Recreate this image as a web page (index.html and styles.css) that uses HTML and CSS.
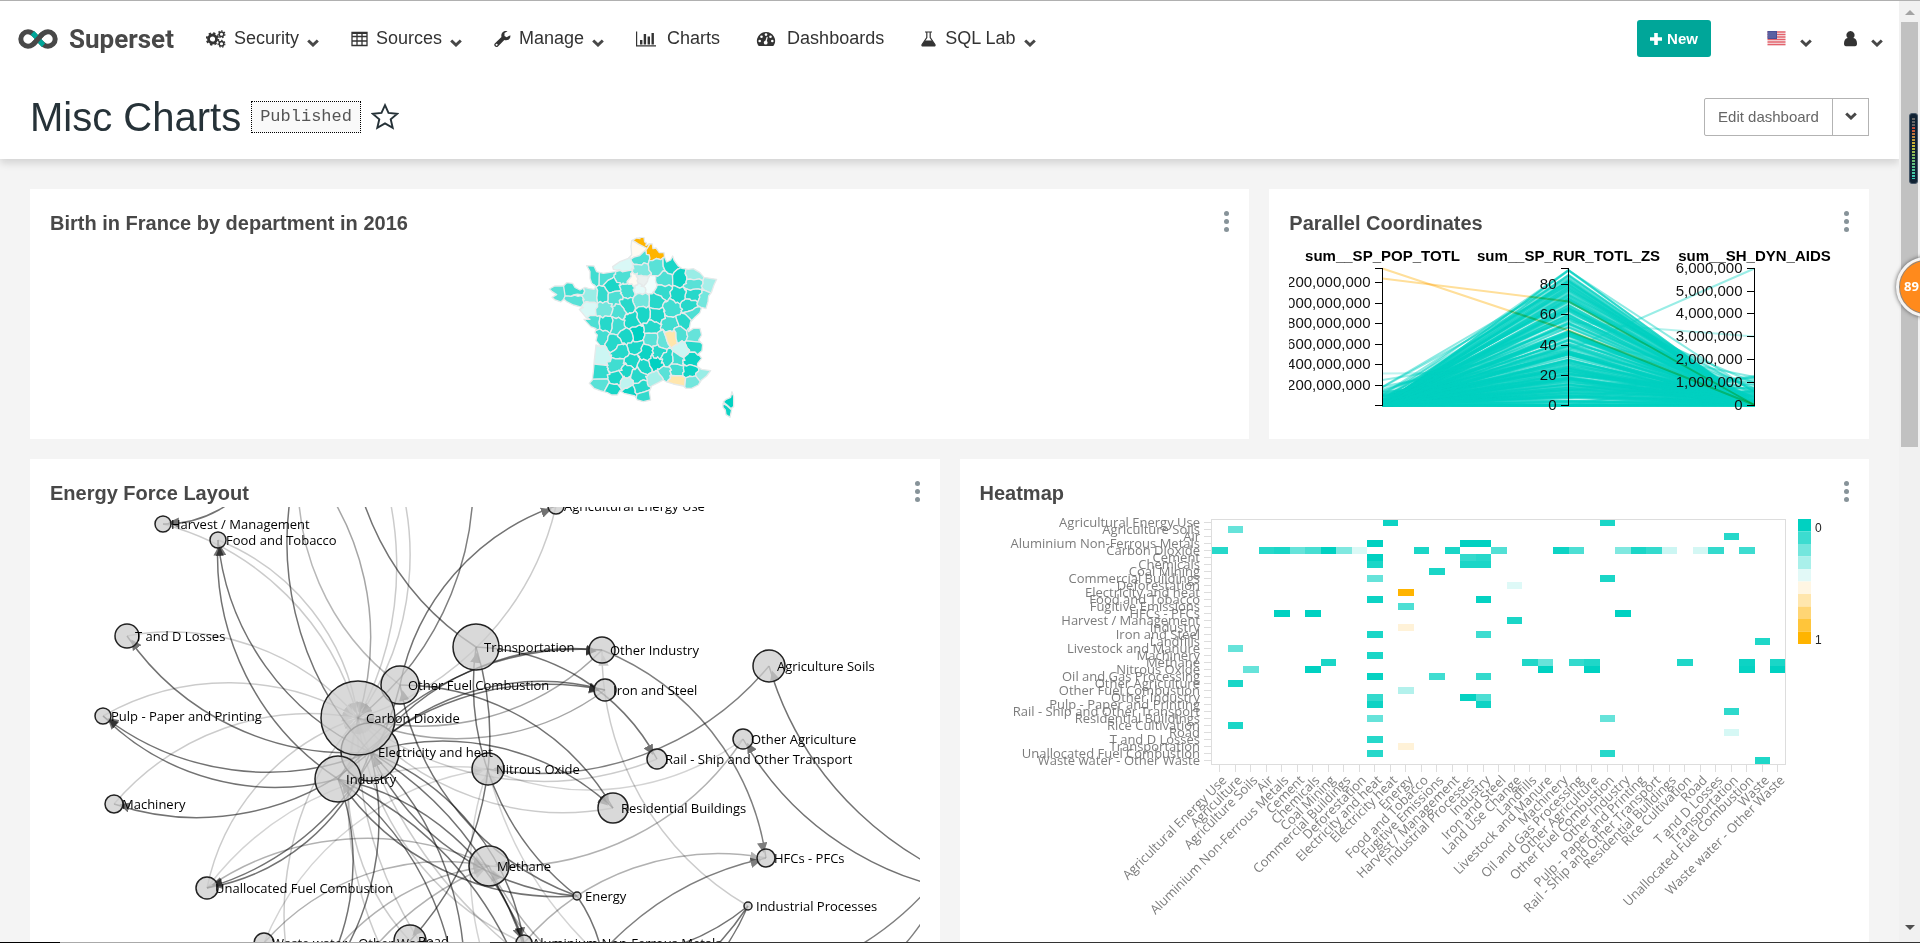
FILE: index.html
```html
<!DOCTYPE html>
<html lang="en">
<head>
<meta charset="utf-8">
<title>Misc Charts - Superset</title>
<link rel="stylesheet" href="styles.css">
</head>
<body>
<div class="app">
  <div class="page">
    <header class="header">
      <nav class="nav">
        <a class="brand" href="#">
          <svg class="brand-mark" viewBox="0 0 40 20" aria-hidden="true">
            <path d="M20 10C15.500 15.500 13.500 17.200 10 17.200A7.200 7.200 0 0 1 10 2.800C13.500 2.800 15.500 4.500 20 10" fill="none" stroke="#484848" stroke-width="5"/>
            <path d="M20 10C24.500 15.500 26.500 17.200 30 17.200A7.200 7.200 0 0 0 30 2.800C26.500 2.800 24.500 4.500 20 10" fill="none" stroke="#484848" stroke-width="5"/>
            <path d="M14.500 3.800C18 7 21.500 12.500 25.500 16.200" fill="none" stroke="#00a699" stroke-width="5"/>
            <path d="M15.500 15.200L24.500 4.800" fill="none" stroke="#484848" stroke-width="5"/>
          </svg>
          <span>Superset</span>
        </a>
        <ul class="menu">
          <li><a class="menu-link" href="#">
            <svg class="icon" viewBox="0 0 20 18" aria-hidden="true">
              <circle cx="6.500" cy="9" r="4" fill="none" stroke="#333" stroke-width="2.800"/>
              <circle cx="6.500" cy="9" r="5.800" fill="none" stroke="#333" stroke-width="1.800" stroke-dasharray="2.300 2.250"/>
              <circle cx="15.500" cy="4.200" r="2.300" fill="none" stroke="#333" stroke-width="1.500"/>
              <circle cx="15.500" cy="4.200" r="3.400" fill="none" stroke="#333" stroke-width="1.200" stroke-dasharray="1.500 1.550"/>
              <circle cx="15.500" cy="13.800" r="2.300" fill="none" stroke="#333" stroke-width="1.500"/>
              <circle cx="15.500" cy="13.800" r="3.400" fill="none" stroke="#333" stroke-width="1.200" stroke-dasharray="1.500 1.550"/>
            </svg><span>Security</span>
            <svg class="chevron" viewBox="0 0 12 8" aria-hidden="true"><path d="M1.200 1.500L6 6L10.800 1.500"/></svg></a></li>
          <li><a class="menu-link" href="#">
            <svg class="icon icon-narrow" viewBox="0 0 17 18" aria-hidden="true">
              <path d="M1 2.500h15v13H1zM1 6.500h15M1 11h15M6 2.500v13M11 2.500v13" fill="none" stroke="#333" stroke-width="1.300"/><path d="M1 2h15v2H1z" fill="#333"/>
            </svg><span>Sources</span>
            <svg class="chevron" viewBox="0 0 12 8" aria-hidden="true"><path d="M1.200 1.500L6 6L10.800 1.500"/></svg></a></li>
          <li><a class="menu-link" href="#">
            <svg class="icon icon-narrow" viewBox="0 0 17 18" aria-hidden="true">
              <path d="M13.500 1.200L10.500 3v3l2.200 1.200L16.300 5.200C17 9 13.500 11 10.300 9.900L4.200 16.200C3 17.400 1.800 17.200.9 16.300C0 15.300 0 14.200 1 13.200L7.500 7C6.500 3.500 9.500.200 13.500 1.200zM2.600 13.800a.9.9 0 1 0 .01 0z" fill="#333" fill-rule="evenodd"/>
            </svg><span>Manage</span>
            <svg class="chevron" viewBox="0 0 12 8" aria-hidden="true"><path d="M1.200 1.500L6 6L10.800 1.500"/></svg></a></li>
          <li class="plain"><a class="menu-link" href="#">
            <svg class="icon" viewBox="0 0 20 18" aria-hidden="true">
              <path d="M.6 1.500V15.900H20" fill="none" stroke="#333" stroke-width="1.200"/>
              <path d="M4 10h2.400v4.500H4zM7.700 4h2.400v10.500H7.700zM11.600 6.500H14v8h-2.400zM15.500 3h2.400v11.500h-2.400z" fill="#333"/>
            </svg><span>Charts</span></a></li>
          <li class="plain"><a class="menu-link" href="#">
            <svg class="icon" viewBox="0 0 20 18" aria-hidden="true">
              <path d="M10 2a9 9 0 0 1 7.800 13.600q-.4.400-1 .400H3.200q-.6 0-1-.400A9 9 0 0 1 10 2z" fill="#333"/>
              <g fill="#fff"><circle cx="3.700" cy="11" r="1.300"/><circle cx="5.500" cy="6.700" r="1.300"/><circle cx="10" cy="4.600" r="1.300"/><circle cx="14.500" cy="6.700" r="1.300"/><circle cx="16.300" cy="11" r="1.300"/><circle cx="9.700" cy="12.700" r="1.900"/><path d="M9 12l1.700-5.200 1 .3L10.500 12.500z"/></g>
            </svg><span>Dashboards</span></a></li>
          <li><a class="menu-link" href="#">
            <svg class="icon icon-narrow" viewBox="0 0 16 18" aria-hidden="true">
              <path d="M4.500 2h7M6.300 2v5.500L1.600 14.500Q1 16 2.500 16h11q1.500 0 .9-1.500L9.700 7.500V2" fill="none" stroke="#333" stroke-width="1.200"/>
              <path d="M4.500 10.500h7l3.200 4.500-.7 1H2l-.7-1z" fill="#333"/>
            </svg><span>SQL Lab</span>
            <svg class="chevron" viewBox="0 0 12 8" aria-hidden="true"><path d="M1.200 1.500L6 6L10.800 1.500"/></svg></a></li>
        </ul>
        <div class="nav-right">
          <button class="new-button" type="button">
            <svg width="12" height="12" viewBox="0 0 12 12" aria-hidden="true"><path d="M6 0v12M0 6h12" stroke="#fff" stroke-width="3.600"/></svg>New</button>
          <button class="icon-button language" type="button" aria-label="Language">
            <svg class="flag" viewBox="0 0 18 15" aria-hidden="true">
              <path d="M0 0h18v15H0z" fill="#f7f2f2"/>
              <path d="M0 1h18M0 3.500h18M0 6h18M0 8.500h18M0 11h18M0 13.500h18" stroke="#e4616b" stroke-width="1.400"/>
              <path d="M0 0h9.500v8H0z" fill="#4a4f96"/>
              <path d="M1 2h8M1 4h8M1 6h8" stroke="#a5a8d0" stroke-width=".8" stroke-dasharray="1 1"/>
            </svg>
            <svg class="chevron" viewBox="0 0 12 8" aria-hidden="true"><path d="M1.200 1.500L6 6L10.800 1.500"/></svg>
          </button>
          <button class="icon-button account" type="button" aria-label="Account">
            <svg class="user" viewBox="0 0 13 16" aria-hidden="true"><path d="M6.500 0a4 4 0 0 1 2.800 6.900Q13 7.500 13 12.500q0 2.800-2 2.800H2q-2 0-2-2.800Q0 7.500 3.700 6.900A4 4 0 0 1 6.500 0z" fill="#333"/></svg>
            <svg class="chevron" viewBox="0 0 12 8" aria-hidden="true"><path d="M1.200 1.500L6 6L10.800 1.500"/></svg>
          </button>
        </div>
      </nav>
      <div class="title-row">
        <h1 class="title">Misc Charts</h1>
        <span class="published">Published</span>
        <button class="star" type="button" aria-label="Favorite">
          <svg width="28" height="27" viewBox="0 0 28 27" aria-hidden="true"><path d="M14 2.200L17.500 9.900L26.300 10.700L19.700 16.300L21.700 24.800L14 20.400L6.300 24.800L8.300 16.300L1.700 10.700L10.500 9.900Z" fill="none" stroke="#263238" stroke-width="1.900"/></svg>
        </button>
        <div class="edit-group">
          <button class="edit" type="button">Edit dashboard</button>
          <button class="edit-more" type="button" aria-label="More actions">
            <svg class="chevron" viewBox="0 0 12 8" aria-hidden="true"><path d="M1.200 1.500L6 6L10.800 1.500"/></svg>
          </button>
        </div>
      </div>
    </header>

    <main class="grid">
      <section class="card wide">
        <div class="card-head"><h2>Birth in France by department in 2016</h2>
          <button class="dots" type="button" aria-label="Chart options"><i></i><i></i><i></i></button></div>
        <svg class="chart short" id="map" viewBox="50 237 1179 182" preserveAspectRatio="xMinYMin meet" role="img" aria-label="Map of France">
          <defs><clipPath id="france"><path id="france-outline"/></clipPath></defs>
        </svg>
      </section>
      <section class="card narrow">
        <div class="card-head"><h2>Parallel Coordinates</h2>
          <button class="dots" type="button" aria-label="Chart options"><i></i><i></i><i></i></button></div>
        <svg class="chart short" id="parallel" viewBox="1289 237 559 182" preserveAspectRatio="xMinYMin meet" role="img" aria-label="Parallel coordinates"></svg>
      </section>
      <section class="card half">
        <div class="card-head"><h2>Energy Force Layout</h2>
          <button class="dots" type="button" aria-label="Chart options"><i></i><i></i><i></i></button></div>
        <svg class="chart tall" id="force" viewBox="50 507 869 470" preserveAspectRatio="xMinYMin meet" role="img" aria-label="Energy force layout">
          <defs><marker id="arrow" viewBox="0 -5 10 10" refX="15" refY="-1.500" markerWidth="7" markerHeight="7" orient="auto"><path d="M0-5L10 0L0 5"/></marker></defs>
        </svg>
      </section>
      <section class="card half">
        <div class="card-head"><h2>Heatmap</h2>
          <button class="dots" type="button" aria-label="Chart options"><i></i><i></i><i></i></button></div>
        <svg class="chart tall" id="heatmap" viewBox="980 507 869 470" preserveAspectRatio="xMinYMin meet" role="img" aria-label="Heatmap"></svg>
      </section>
    </main>
  </div>
  <aside class="scrollbar" aria-hidden="true">
    <span class="arrow-up"></span><span class="thumb"></span><span class="arrow-down"></span>
  </aside>
</div>
<div class="meter" aria-hidden="true"><span></span></div>
<div class="score">89</div>
<div class="taskline"></div>
<script src="script.js"></script>
</body>
</html>
```
FILE: styles.css
```css
* { box-sizing: border-box; }
body {
  margin: 0;
  height: 100vh;
  overflow: hidden;
  background: #f4f4f4;
  font-family: "Liberation Sans", Arial, sans-serif;
  color: #484848;
}
button { font: inherit; color: inherit; background: none; border: 0; padding: 0; }
a { color: inherit; text-decoration: none; }
.app { display: flex; height: 100vh; border-top: 1px solid #b0b0b0; }
.page { flex: 1; min-width: 0; overflow: hidden; }

.header { background: #fff; box-shadow: 0 4px 8px rgba(0, 0, 0, 0.14); position: relative; }
.nav { display: flex; align-items: center; height: 75px; padding: 0 16px 0 18px; }
.brand { display: flex; align-items: center; gap: 11px; font: bold 26px/28px Roboto, sans-serif; color: #484848; margin-right: 32px; }
.brand-mark { width: 40px; height: 20px; }
.menu { display: flex; list-style: none; margin: 0; padding: 0; gap: 32px; font-size: 18px; color: #333; }
.plain { margin-right: 4px; }
.menu-link { display: flex; align-items: center; gap: 8px; }
.plain .menu-link { gap: 11px; }
.icon { width: 20px; height: 18px; }
.icon-narrow { width: 17px; }
.chevron { width: 12px; height: 8px; fill: none; stroke: #484848; stroke-width: 3; }
.menu .chevron, .icon-button .chevron { margin-top: 8px; }
.nav-right { display: flex; align-items: center; margin-left: auto; }
.new-button { display: flex; align-items: center; justify-content: center; gap: 5px; width: 74px; height: 37px; border-radius: 3px; background: #00a699; color: #fff; font-size: 15px; font-weight: bold; margin-right: 56px; }
.icon-button { display: flex; align-items: center; gap: 14px; }
.language { margin-right: 32px; }
.flag { width: 19px; height: 15px; }
.user { width: 13px; height: 16px; }

.title-row { display: flex; align-items: center; height: 83px; padding: 0 30px 2px; }
.title { margin: 0; font-size: 40px; font-weight: normal; line-height: 46px; color: #263238; }
.published { margin-left: 10px; height: 32px; padding: 0 8px; border: 1px dotted #000; background: #f9f9f9; font: 17px/30px "Liberation Mono", monospace; color: #555; }
.star { margin-left: 10px; height: 27px; }
.edit-group { display: flex; margin-left: auto; height: 38px; }
.edit { width: 129px; border: 1px solid #b3b3b3; border-radius: 2px 0 0 2px; font-size: 15px; color: #666; }
.edit-more { width: 37px; margin-left: -1px; padding-bottom: 4px; border: 1px solid #b3b3b3; }

.grid { display: grid; grid-template-columns: repeat(12, 1fr); gap: 20px; padding: 30px; }
.card { min-width: 0; background: #fff; padding: 20px; }
.wide { grid-column: span 8; }
.narrow { grid-column: span 4; }
.half { grid-column: span 6; }
.card-head { display: flex; justify-content: space-between; height: 28px; }
.card-head h2 { margin: 0; padding-top: 2px; font-size: 20px; line-height: 24px; }
.dots { display: flex; flex-direction: column; gap: 3px; padding-top: 2px; height: 26px; }
.dots i { width: 5px; height: 5px; border-radius: 50%; background: #879399; }
.chart { display: block; width: 100%; overflow: hidden; }
.short { height: 182px; }
.tall { height: 470px; }

.dept { stroke: #e6eaea; stroke-width: 4; stroke-linejoin: round; }
.coast { fill: none; stroke: #e6eaea; stroke-width: 4; stroke-linejoin: round; }
.line { fill: none; stroke: #00d1c1; stroke-width: 2; }
.line-warm { fill: none; stroke: #ffdf9a; stroke-width: 2; mix-blend-mode: multiply; }
.axis { fill: none; stroke: #000; stroke-width: 1; shape-rendering: crispEdges; }
.axis-text { font-size: 15px; fill: #111; text-anchor: end; }
.axis-title { font-size: 15px; font-weight: bold; fill: #000; text-anchor: middle; }
.link { fill: none; stroke: #000; stroke-width: 1.5; }
.node { fill: #ccc; fill-opacity: 0.75; stroke: #222; stroke-width: 1.5; }
.node-text { font: 13px "Open Sans", sans-serif; fill: #000; }
.cell { shape-rendering: crispEdges; }
.frame { fill: none; stroke: #ddd; shape-rendering: crispEdges; }
.heat-text { font: 13px "Open Sans", sans-serif; fill: #7c7c7c; text-anchor: end; }
.legend-text { font-size: 12px; fill: #222; }

.scrollbar { display: flex; flex-direction: column; align-items: center; width: 21px; padding: 9px 0 13px; background: #f1f1f1; }
.arrow-up { border: 5px solid transparent; border-top: 0; border-bottom-color: #a3a3a3; }
.thumb { width: 17px; height: 425px; margin-top: 7px; background: #c1c1c1; }
.arrow-down { margin-top: auto; border: 5px solid transparent; border-bottom: 0; border-top-color: #505050; }
.meter { position: fixed; right: 2px; top: 113px; width: 9px; height: 71px; padding: 4px 2px; border-radius: 3px; background: #123; border: 1px solid #456; }
.meter span { display: block; height: 100%; background: repeating-linear-gradient(transparent 0 2px, #123 2px 3px), linear-gradient(#666 14%, #c43 16%, #b84 30%, #cb3 45%, #7b6 65%, #3cb 100%); }
.score { position: fixed; right: -36px; top: 257px; width: 60px; height: 60px; padding-left: 5px; border: 3px solid #f4f4f4; border-radius: 50%; background: #ff8a1c; box-shadow: 0 0 0 1px #888 inset, 0 0 4px #555; color: #fff; font: bold 13px/52px "Open Sans", sans-serif; }
.taskline { position: fixed; left: 0; right: 0; bottom: 0; height: 1px; background: linear-gradient(90deg, #000 60px, #aaa 60px 490px, #333 490px); }
```
FILE: script.js
```javascript
const NS = 'http://www.w3.org/2000/svg';
function add(parent, tag, attrs, text) {
  const el = document.createElementNS(NS, tag);
  for (const key in attrs) el.setAttribute(key, attrs[key]);
  if (text !== undefined) el.textContent = text;
  parent.appendChild(el);
  return el;
}
let state = 7;
function random() {
  state = (state * 16807) % 2147483647;
  return state / 2147483647;
}
function tint(t) {
  if (t === 'orange') return '#ffb400';
  if (t === 'sand') return '#ffe6ad';
  if (t === 'cream') return '#fff2d8';
  if (t === 'ivory') return '#fffaf2';
  if (t === 'grey') return '#eaf0ef';
  return `rgb(${Math.round(255 * t)},${Math.round(209 + 46 * t)},${Math.round(193 + 62 * t)})`;
}

/* ---- Map of France ---- */
function drawMap() {
  const svg = document.getElementById('map');
  const outline = '335,62 350,54 360,56 358,52 372,52 374,66 379,68 378,76 388,71 397,72 399,86 408,84 418,98 432,98 434,112 440,126 452,120 458,108 462,120 475,138 485,145 505,148 520,146 540,158 552,172 570,175 590,178 582,195 574,218 566,228 564,245 558,266 545,262 540,278 525,292 512,305 508,325 505,335 520,325 540,325 545,345 536,360 548,374 546,392 535,402 545,415 533,430 532,440 545,448 572,452 560,468 545,480 535,495 515,505 498,505 490,498 460,492 440,486 430,480 415,488 395,498 388,515 392,540 370,545 352,540 345,528 312,520 300,512 292,525 275,525 262,518 240,512 222,505 208,490 217,480 220,455 223,420 228,375 245,382 228,362 232,345 225,338 228,326 212,320 192,298 210,298 198,292 188,280 178,268 190,262 178,260 160,255 140,245 132,238 122,246 105,240 96,232 110,224 95,214 88,207 104,198 130,198 140,188 158,190 165,202 180,210 195,202 205,205 222,208 228,200 215,190 210,175 210,155 200,137 222,138 230,155 250,160 285,155 300,152 280,148 278,140 300,125 325,115 335,105 333,80';
  const path = 'M' + outline.split(' ').join('L') + 'Z';
  document.getElementById('france-outline').setAttribute('d', path);
  const seeds = [
    [350,90,'ivory'],[368,60,'orange'],[408,98,'orange'],[362,117,.3],[312,135,.85],[366,150,.5],[413,140,.35],[453,138,.1],
    [258,172,.3],[217,170,.25],[312,170,.3],[275,197,.1],[326,208,.25],[345,185,'ivory'],[365,182,'grey'],[385,195,.95],[358,207,.9],
    [435,175,.3],[480,175,.05],[522,162,.6],[572,190,.65],[520,195,.35],[520,222,.15],[556,240,.45],[430,218,.2],[475,228,.1],
    [363,240,.45],[108,218,.35],[165,208,.25],[165,243,.35],[212,225,.6],[247,225,.2],[282,232,.3],[322,258,.15],[410,243,.15],
    [458,265,.25],[510,255,.15],[520,282,.3],[208,270,.85],[252,268,.45],[298,275,.3],[370,285,.1],[408,285,.1],[335,300,.1],
    [220,308,.3],[258,312,.15],[292,315,.25],[450,312,.25],[495,308,.15],[395,325,.15],[350,342,0],[320,350,.1],[245,352,.25],
    [280,368,.15],[395,360,.35],[430,362,.4],[454,352,'sand'],[480,342,.3],[525,345,.4],[522,378,.15],[485,390,.8],[345,383,.1],
    [300,395,.15],[378,400,.05],[418,396,.15],[442,415,.15],[470,415,.25],[515,420,.05],[245,410,.8],[335,422,.1],[290,437,.25],
    [375,438,.1],[408,430,0],[240,458,.2],[320,455,.1],[290,472,.1],[355,468,.15],[435,460,.35],[470,456,.25],[512,452,.05],
    [552,458,.6],[470,484,'sand'],[515,487,.45],[405,478,.65],[240,497,.35],[277,510,.1],[320,490,.75],[330,517,.05],[365,503,.15],[370,530,.2]
  ];
  const g = add(svg, 'g', { transform: 'translate(520 220) scale(0.3333)' });
  const cells = add(g, 'g', { 'clip-path': 'url(#france)' });
  const wobble = (x, y, k) => 3.5 * Math.sin(Math.round(x) * 12.9 * k + Math.round(y) * 78.2);
  seeds.forEach(([sx, sy, value], i) => {
    let poly = [[40, 20], [680, 20], [680, 600], [40, 600]];
    seeds.forEach(([ox, oy], j) => {
      if (i === j) return;
      const mx = (sx + ox) / 2, my = (sy + oy) / 2, nx = ox - sx, ny = oy - sy;
      const side = p => (p[0] - mx) * nx + (p[1] - my) * ny;
      const next = [];
      poly.forEach((p, k) => {
        const q = poly[(k + 1) % poly.length], a = side(p), b = side(q);
        if (a <= 0) next.push(p);
        if ((a < 0 && b > 0) || (a > 0 && b < 0)) {
          const t = a / (a - b);
          next.push([p[0] + (q[0] - p[0]) * t, p[1] + (q[1] - p[1]) * t]);
        }
      });
      poly = next;
    });
    const points = [];
    poly.forEach((p, k) => {
      const q = poly[(k + 1) % poly.length];
      const length = Math.hypot(q[0] - p[0], q[1] - p[1]);
      const steps = length > 12 ? 4 : 1;
      for (let s = 0; s < steps; s++) {
        const x = p[0] + (q[0] - p[0]) * s / steps, y = p[1] + (q[1] - p[1]) * s / steps;
        points.push((x + wobble(x, y, 1)).toFixed(1) + ',' + (y + wobble(x, y, 2)).toFixed(1));
      }
    });
    add(cells, 'polygon', { points: points.join(' '), fill: tint(value), class: 'dept' });
  });
  add(g, 'path', { d: path, class: 'coast' });
  add(g, 'path', { d: 'M636 515L641 530V560L633 566L622 556L610 546L618 538L632 532Z', fill: tint(0), class: 'dept' });
  add(g, 'path', { d: 'M609 550L622 558L635 570L630 592L618 584L616 570L609 562Z', fill: tint(0.05), class: 'dept' });
}

/* ---- Parallel coordinates ---- */
function drawParallel() {
  const svg = document.getElementById('parallel');
  const X = [1382.5, 1568.5, 1754.5], top = 268.5, bottom = 405.5;
  const line = (a, b, c, opacity) => add(svg, 'path', { d: `M${X[0]} ${a}L${X[1]} ${b}L${X[2]} ${c}`, class: 'line', opacity });
  for (let i = 0; i < 260; i++) {
    const a = bottom - Math.pow(random(), 14) * 20;
    const b = i < 12 ? bottom : top + 1 + Math.pow(random(), 0.85) * 137;
    const c = bottom - Math.pow(random(), 9) * 30;
    line(a.toFixed(1), b.toFixed(1), c.toFixed(1), 0.45);
  }
  line(373.5, 372, 392, 0.25);
  line(380, 350, 268.5, 0.4);
  line(404, 322, 336.5, 0.3);
  add(svg, 'path', { d: `M${X[0]} 268.5L${X[1]} 330.5L${X[2]} 405`, class: 'line-warm' });
  add(svg, 'path', { d: `M${X[0]} 278.5L${X[1]} 301.5L${X[2]} 405`, class: 'line-warm' });
  const axes = [
    ['sum__SP_POP_TOTL', [['1,200,000,000', 282.5], ['1,000,000,000', 303.5], ['800,000,000', 323.5], ['600,000,000', 344.5], ['400,000,000', 364.5], ['200,000,000', 385.5]]],
    ['sum__SP_RUR_TOTL_ZS', [['80', 284.5], ['60', 314.5], ['40', 345.5], ['20', 375.5], ['0', 405.5]]],
    ['sum__SH_DYN_AIDS', [['6,000,000', 268.5], ['5,000,000', 291.5], ['4,000,000', 313.5], ['3,000,000', 336.5], ['2,000,000', 359.5], ['1,000,000', 382.5], ['0', 405.5]]]
  ];
  axes.forEach(([name, ticks], i) => {
    add(svg, 'path', { d: `M${X[i] - 8} ${top}h8V${bottom}h-8`, class: 'axis' });
    ticks.forEach(([label, y]) => {
      add(svg, 'path', { d: `M${X[i] - 8} ${y}h8`, class: 'axis' });
      add(svg, 'text', { x: X[i] - 12, y: y + 4, class: 'axis-text' }, label);
    });
    add(svg, 'text', { x: X[i], y: 261, class: 'axis-title' }, name);
  });
}

/* ---- Energy data shared by both lower charts ---- */
const sources = ['Agricultural Energy Use', 'Agriculture', 'Agriculture Soils', 'Air', 'Aluminium Non-Ferrous Metals', 'Cement', 'Chemicals', 'Coal Mining', 'Commercial Buildings', 'Deforestation', 'Electricity and heat', 'Electricity heat', 'Energy', 'Food and Tobacco', 'Fugitive Emissions', 'Harvest / Management', 'Industrial Processes', 'Industry', 'Iron and Steel', 'Land Use Change', 'Landfills', 'Livestock and Manure', 'Machinery', 'Oil and Gas Processing', 'Other Agriculture', 'Other Fuel Combustion', 'Other Industry', 'Pulp - Paper and Printing', 'Rail - Ship and Other Transport', 'Residential Buildings', 'Rice Cultivation', 'Road', 'T and D Losses', 'Transportation', 'Unallocated Fuel Combustion', 'Waste', 'Waste water - Other Waste'];
const targets = ['Agricultural Energy Use', 'Agriculture Soils', 'Air', 'Aluminium Non-Ferrous Metals', 'Carbon Dioxide', 'Cement', 'Chemicals', 'Coal Mining', 'Commercial Buildings', 'Deforestation', 'Electricity and heat', 'Food and Tobacco', 'Fugitive Emissions', 'HFCs - PFCs', 'Harvest / Management', 'Industry', 'Iron and Steel', 'Landfills', 'Livestock and Manure', 'Machinery', 'Methane', 'Nitrous Oxide', 'Oil and Gas Processing', 'Other Agriculture', 'Other Fuel Combustion', 'Other Industry', 'Pulp - Paper and Printing', 'Rail - Ship and Other Transport', 'Residential Buildings', 'Rice Cultivation', 'Road', 'T and D Losses', 'Transportation', 'Unallocated Fuel Combustion', 'Waste water - Other Waste'];
const flows = [
  [11,0,.05],[25,0,.1],[1,1,.4],[33,2,.15],[10,3,0],[16,3,0],[17,3,0],
  [0,4,.15],[3,4,.15],[4,4,.1],[5,4,.4],[6,4,.28],[7,4,0],[8,4,.5],[9,4,.86],[13,4,.1],[15,4,.1],[18,4,.32],[22,4,.05],[23,4,.3],[26,4,.5],[27,4,.1],[28,4,.2],[29,4,.8],[31,4,.83],[32,4,.2],[34,4,.24],
  [10,5,0],[16,5,.2],[17,5,.15],[10,6,.1],[16,6,.1],[17,6,.1],[14,7,.1],[10,8,.4],[25,8,.1],[19,9,.87],[12,10,'orange'],
  [10,11,.05],[17,11,.02],[12,12,.3],[4,13,0],[6,13,0],[26,13,0],[19,14,.1],[12,15,'cream'],[10,16,.1],[17,16,.24],[35,17,.12],[1,18,.4],[10,19,.1],
  [7,20,.1],[20,20,.12],[21,20,.4],[23,20,.2],[24,20,.12],[30,20,.12],[34,20,.05],[36,20,.1],[2,21,.4],[6,21,0],[21,21,0],[24,21,0],[34,21,.02],[36,21,0],
  [10,22,.02],[14,22,.25],[17,22,.2],[1,23,.1],[12,24,.7],[10,25,.2],[16,25,.02],[17,25,.3],[10,26,.05],[17,26,.05],[33,27,.18],[10,28,.4],[25,28,.4],
  [1,29,.1],[33,30,.84],[10,31,.15],[12,32,'cream'],[10,33,.15],[25,33,.15],[35,34,.12]
];

function drawForce() {
  const svg = document.getElementById('force');
  const nodes = {
    'Harvest / Management': [163,524,8], 'Food and Tobacco': [218,540,8], 'T and D Losses': [127,636,12], 'Pulp - Paper and Printing': [103,716,8],
    'Machinery': [114,804,9], 'Unallocated Fuel Combustion': [207,888,11], 'Waste water - Other Waste': [264,943,10], 'Road': [410,941,16],
    'Transportation': [476,647,23], 'Other Fuel Combustion': [400,685,19], 'Electricity and heat': [370,752,29], 'Carbon Dioxide': [358,718,37],
    'Industry': [338,779,23], 'Nitrous Oxide': [488,769,16], 'Methane': [489,866,20], 'Other Industry': [602,650,13], 'Iron and Steel': [605,690,11],
    'Rail - Ship and Other Transport': [657,759,10], 'Residential Buildings': [613,808,15], 'Agriculture Soils': [769,666,16], 'Other Agriculture': [743,739,10],
    'HFCs - PFCs': [766,858,9], 'Energy': [577,896,4], 'Industrial Processes': [748,906,4], 'Agricultural Energy Use': [556,506,8],
    'Aluminium Non-Ferrous Metals': [524,943,8],
    'Commercial Buildings': [300,455,14], 'Air': [350,400,9], 'Cement': [455,1050,12], 'Chemicals': [540,1060,14], 'Oil and Gas Processing': [300,1010,10],
    'Fugitive Emissions': [590,1060,10], 'Coal Mining': [700,1040,8], 'Agriculture': [1010,895,8], 'Livestock and Manure': [750,1040,14],
    'Land Use Change': [260,470,6], 'Deforestation': [385,440,12], 'Waste': [150,1090,6], 'Landfills': [300,1110,10]
  };
  const opacityFor = (s, t) => {
    if (t === 'Carbon Dioxide') return s === 'Commercial Buildings' || s === 'Iron and Steel' || s === 'Other Industry' ? 0.35 : 0.2;
    if (t === 'Methane') return 0.3;
    if (t === 'Nitrous Oxide') return s === 'Agriculture Soils' ? 0.5 : 0.17;
    if (s === 'Industrial Processes' && t === 'Other Industry') return 0.2;
    if (s === 'Other Fuel Combustion' && t === 'Commercial Buildings') return 0.28;
    if (t === 'HFCs - PFCs') return s === 'Aluminium Non-Ferrous Metals' ? 0.3 : 0.5;
    return 0.55;
  };
  const link = (s, t, opacity) => {
    const d = Math.hypot(s[0] - t[0], s[1] - t[1]).toFixed(1);
    add(svg, 'path', { d: `M${s[0]} ${s[1]}A${d} ${d} 0 0 1 ${t[0]} ${t[1]}`, class: 'link', opacity, 'marker-end': 'url(#arrow)' });
  };
  flows.forEach(([c, r]) => {
    const s = nodes[sources[c]], t = nodes[targets[r]];
    if (s && t) link(s, t, opacityFor(sources[c], targets[r]));
  });
  link([470, 440], nodes['Carbon Dioxide'], 0.5);
  link([985, 790], [770, 980], 0.5);
  link([962, 820], [812, 1010], 0.5);
  const visible = Object.entries(nodes).filter(([, [x, y]]) => y > 490 && y < 960 && x < 919);
  visible.forEach(([, [cx, cy, r]]) => add(svg, 'circle', { cx, cy, r, class: 'node' }));
  visible.forEach(([name, [cx, cy]]) => add(svg, 'text', { x: cx + 8, y: cy + 5, class: 'node-text' }, name));
}

function drawHeatmap() {
  const svg = document.getElementById('heatmap');
  const left = 1212, top = 520, w = 15.5, h = 7;
  flows.forEach(([c, r, v]) => {
    add(svg, 'rect', { x: left + c * w, y: top + r * h - 1, width: w, height: h, fill: tint(v), class: 'cell' });
  });
  add(svg, 'rect', { x: 1211.5, y: 519.5, width: 574, height: 245, class: 'frame' });
  targets.forEach((name, i) => {
    const y = top + i * h + 2;
    add(svg, 'path', { d: `M1204 ${y}.5h7`, class: 'frame' });
    add(svg, 'text', { x: 1200, y: y + 5, class: 'heat-text' }, name);
  });
  sources.forEach((name, i) => {
    const x = left + i * w + 7.5;
    add(svg, 'path', { d: `M${x} 765v7`, class: 'frame' });
    add(svg, 'text', { transform: `translate(${x + 8} 781) rotate(-45)`, class: 'heat-text' }, name);
  });
  const steps = ['#00d1c1', '#3cdcd0', '#73e6dd', '#a9f0ea', '#e2f9f7', '#fff6e3', '#ffe6ad', '#ffd574', '#ffc53a', '#ffb400'];
  steps.forEach((fill, i) => add(svg, 'rect', { x: 1798, y: 519 + i * 12.5, width: 13, height: 12.5, fill }));
  add(svg, 'text', { x: 1815, y: 532, class: 'legend-text' }, '0');
  add(svg, 'text', { x: 1815, y: 644, class: 'legend-text' }, '1');
}

drawMap();
drawParallel();
drawForce();
drawHeatmap();
```
